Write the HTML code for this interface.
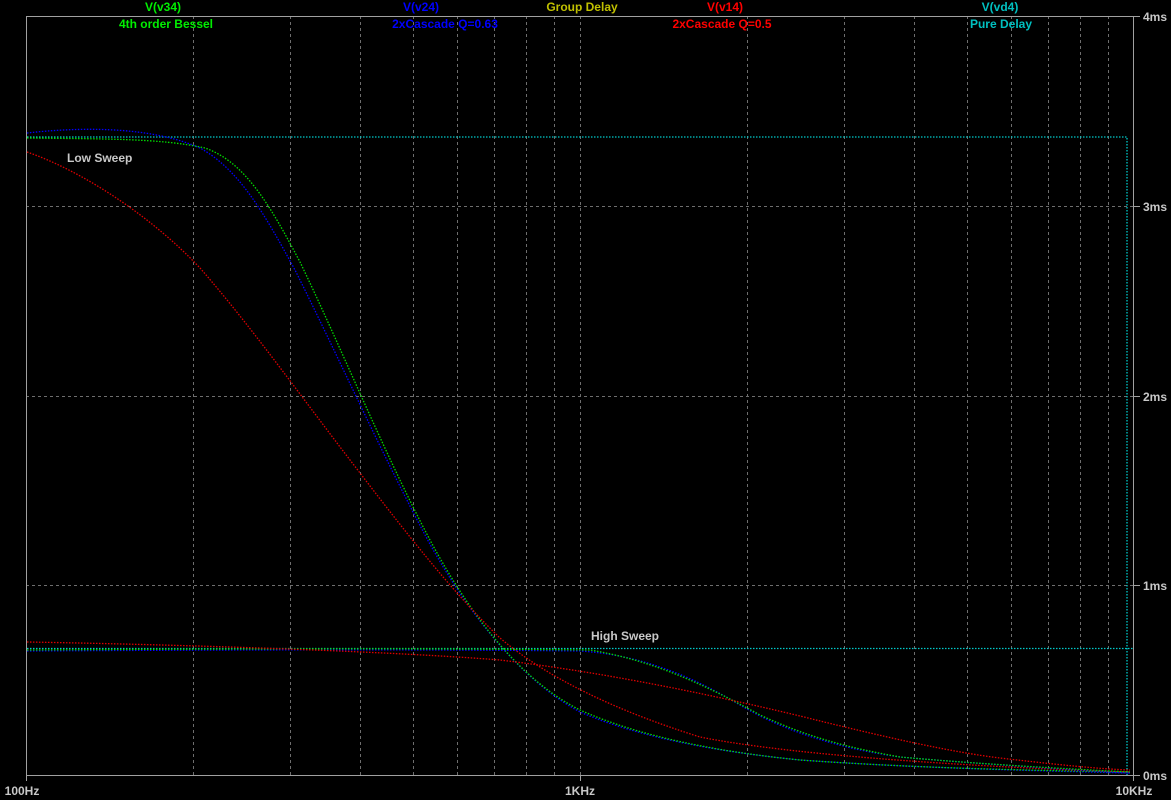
<!DOCTYPE html>
<html><head><style>
body{margin:0;background:#000;width:1171px;height:800px;overflow:hidden}
svg{display:block}
text{font-family:"Liberation Sans",sans-serif;font-weight:bold;font-size:12px}
</style></head><body>
<svg width="1171" height="800" viewBox="0 0 1171 800">
<g stroke="#6e6e6e" stroke-width="1" stroke-dasharray="3 3" fill="none">
<path d="M193.5 16V775M290.5 16V775M360.5 16V775M413.5 16V775M457.5 16V775M494.5 16V775M526.5 16V775M554.5 16V775M580.5 16V775
M747.5 16V775M844.5 16V775M914.5 16V775M967.5 16V775M1011.5 16V775M1048.5 16V775M1080.5 16V775M1108.5 16V775
M26 206.5H1134M26 396.5H1134M26 585.5H1134"/>
</g>
<rect x="26.5" y="16.5" width="1107" height="759" fill="none" stroke="#a0a0a0"/>
<g stroke="#a0a0a0"><path d="M1134 16.5h6M1134 206.5h6M1134 396.5h6M1134 585.5h6M1134 775.5h6M580.5 775v6M26.5 775v6M1133.5 775v6"/></g>
<g fill="none" stroke-width="1.3" stroke-dasharray="1.5 1.5">
<path stroke="#00c8c8" d="M27 137H1127V775M27 648.5H1133"/>
<path stroke="#0000ff" d="M27 133C80 127 150 126 200 148C240 170 265 215 295 270C335 350 380 450 425 535C465 610 520 680 580 712C640 738 720 752 800 760C900 767 1000 770 1130 773"/>
<path stroke="#00dd00" d="M27 138C100 139 160 138 205 148C245 162 270 205 300 262C340 345 385 455 430 540C470 615 520 680 580 710C640 737 720 752 800 760C900 767 1000 770 1130 772"/>
<path stroke="#e00000" d="M27 152C80 170 150 215 200 268C250 325 300 395 350 460C400 525 450 590 500 638C550 680 620 712 700 737C800 757 1000 768 1130 772"/>
<path stroke="#0000ff" d="M27 651C200 650 400 649 580 651C640 655 690 675 740 705C790 735 850 750 900 757C1000 766 1130 773 1130 773"/>
<path stroke="#00dd00" d="M27 650C200 649 400 648 590 650C650 660 700 682 760 715C810 738 850 748 900 757C1000 766 1130 772 1130 772"/>
<path stroke="#e00000" d="M27 642C200 645 400 652 500 660C600 672 700 692 800 716C880 736 950 752 1000 758C1060 765 1100 769 1130 770"/>
</g>
<text x="163" y="11" fill="#00ee00" text-anchor="middle">V(v34)</text>
<text x="166" y="28" fill="#00ee00" text-anchor="middle">4th order Bessel</text>
<text x="421" y="11" fill="#0000ff" text-anchor="middle">V(v24)</text>
<text x="445" y="28" fill="#0000ff" text-anchor="middle">2xCascade Q=0.63</text>
<text x="582" y="11" fill="#c0c000" text-anchor="middle">Group Delay</text>
<text x="725" y="11" fill="#ff0000" text-anchor="middle">V(v14)</text>
<text x="722" y="28" fill="#ff0000" text-anchor="middle">2xCascade Q=0.5</text>
<text x="1000" y="11" fill="#00c0c0" text-anchor="middle">V(vd4)</text>
<text x="1001" y="28" fill="#00c0c0" text-anchor="middle">Pure Delay</text>
<text x="67" y="162" fill="#c8c8c8">Low Sweep</text>
<text x="591" y="640" fill="#c8c8c8">High Sweep</text>
<g fill="#c8c8c8">
<text x="1143" y="21">4ms</text>
<text x="1143" y="211">3ms</text>
<text x="1143" y="401">2ms</text>
<text x="1143" y="590">1ms</text>
<text x="1143" y="780">0ms</text>
<text x="22" y="795" text-anchor="middle">100Hz</text>
<text x="580" y="795" text-anchor="middle">1KHz</text>
<text x="1134" y="795" text-anchor="middle">10KHz</text>
</g>
</svg>
</body></html>
